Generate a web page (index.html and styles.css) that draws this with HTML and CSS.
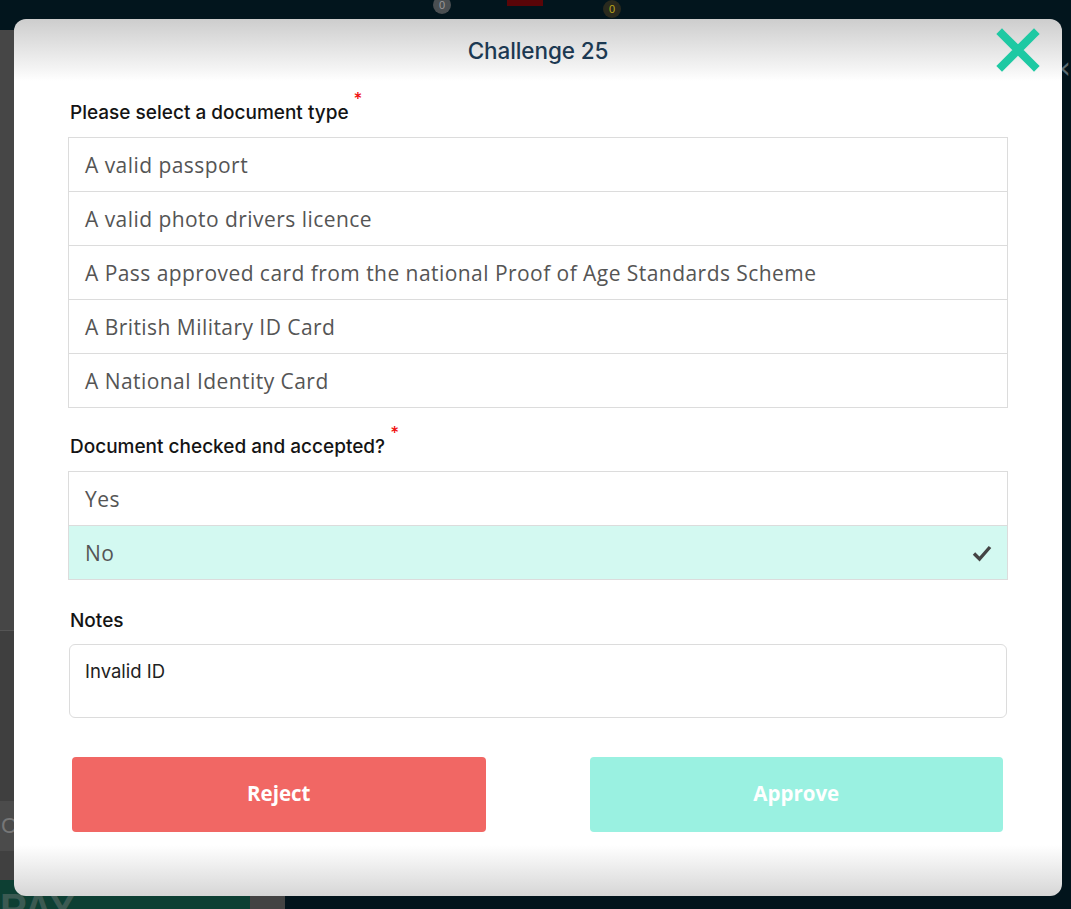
FILE: index.html
```html
<!DOCTYPE html>
<html lang="en">
<head>
<meta charset="utf-8">
<title>Challenge 25</title>
<link rel="stylesheet" href="styles.css">
</head>
<body>
<div class="backdrop">
  <div class="topbar">
    <span class="tb-badge tb-grey">0</span>
    <span class="tb-flag"></span>
    <span class="tb-badge tb-yellow">0</span>
  </div>
  <div class="middle">
    <div class="side">
      <div class="side-a"><span class="dots">⋮</span></div>
      <div class="side-b"></div>
      <div class="side-c">C</div>
      <div class="side-d"></div>
    </div>
    <div class="main-bg"><span class="chev">‹</span></div>
  </div>
  <div class="bottombar">
    <div class="bb-green">PAY</div>
    <div class="bb-grey"></div>
  </div>
</div>

<div class="modal">
  <div class="modal-head">
    <h1 class="modal-title">Challenge 25</h1>
    <button class="close" aria-label="Close">
      <svg viewBox="0 0 44 44" width="44" height="44"><path d="M6 6 L38 38 M38 6 L6 38" stroke="#1ec9a3" stroke-width="8" stroke-linecap="square" fill="none"/></svg>
    </button>
  </div>
  <div class="modal-body">
    <div class="field-label">Please select a document type<span class="req">*</span></div>
    <ul class="options">
      <li>A valid passport</li>
      <li>A valid photo drivers licence</li>
      <li>A Pass approved card from the national Proof of Age Standards Scheme</li>
      <li>A British Military ID Card</li>
      <li>A National Identity Card</li>
    </ul>

    <div class="field-label gap-top">Document checked and accepted?<span class="req">*</span></div>
    <ul class="options">
      <li>Yes</li>
      <li class="selected">No
        <svg class="tick" viewBox="0 0 20 18" width="20" height="18"><path d="M2 9.5 L7.5 15 L18 3" stroke="#444" stroke-width="3.4" fill="none"/></svg>
      </li>
    </ul>

    <div class="field-label notes-label">Notes</div>
    <div class="notes">Invalid ID</div>

    <div class="actions">
      <button class="btn btn-reject">Reject</button>
      <button class="btn btn-approve">Approve</button>
    </div>
  </div>
</div>
</body>
</html>
```

FILE: styles.css
```css
html, body {
  margin: 0;
  padding: 0;
  height: 100%;
}
body {
  background: #02141c;
  font-family: "Open Sans", sans-serif;
  overflow: hidden;
}

/* backdrop (app behind the dialog) */
.backdrop {
  display: flex;
  flex-direction: column;
  height: 909px;
}
.topbar {
  height: 30px;
  background: #02151d;
  position: relative;
}
.tb-badge {
  position: absolute;
  width: 18px;
  height: 18px;
  border-radius: 50%;
  font: 11px/18px "Liberation Sans", sans-serif;
  text-align: center;
}
.tb-grey { left: 433px; top: -4px; background: #4a4f52; color: #999; }
.tb-yellow { left: 603px; top: 0; background: #2a2a1e; color: #bba51c; }
.tb-flag {
  position: absolute;
  left: 507px;
  top: 0;
  width: 36px;
  height: 6px;
  background: #5a0508;
}
.middle {
  flex: 1;
  display: flex;
}
.side {
  width: 250px;
  display: flex;
  flex-direction: column;
}
.side-a { height: 600px; background: #464646; position: relative; }
.dots { position: absolute; left: 8px; top: 16px; color: #0a1a22; font: bold 22px "DejaVu Sans", sans-serif; }
.side-b { height: 170px; background: #3f3f3f; border-top: 1px solid #555; }
.side-c { height: 50px; background: #4b4b4b; color: #777; font: 22px/50px "Liberation Sans", sans-serif; padding-left: 1px; }
.side-d { flex: 1; background: #404040; }
.main-bg { flex: 1; background: #02141c; position: relative; }
.chev { position: absolute; right: 0; top: 20px; color: #5a6b72; font: 30px "DejaVu Sans", sans-serif; }
.bottombar {
  height: 29px;
  display: flex;
}
.bb-green {
  width: 250px;
  background: #0d3f33;
  color: #3b5a52;
  font: bold 40px/29px "Liberation Sans", sans-serif;
  padding-top: 14px;
  box-sizing: border-box;
  overflow: hidden;
}
.bb-grey { width: 35px; background: #434343; }

/* modal */
.modal {
  position: absolute;
  left: 14px;
  top: 19px;
  width: 1048px;
  height: 877px;
  border-radius: 12px;
  background: linear-gradient(to bottom, #cdcdcd 0, #f6f6f6 52px, #ffffff 62px, #ffffff 826px, #d6d6d6 877px);
  box-sizing: border-box;
}
.modal-head {
  height: 62px;
  display: flex;
  align-items: center;
  justify-content: center;
  position: relative;
}
.modal-title {
  margin: 0;
  font: 500 22.5px "Inter", sans-serif;
  color: #1c3952;
  letter-spacing: -0.1px;
}
.close {
  position: absolute;
  right: 22px;
  top: 9px;
  border: 0;
  background: none;
  padding: 0;
  width: 44px;
  height: 44px;
}
.close svg { display: block; }

.modal-body {
  padding: 20px 54px 0;
}
.field-label {
  font: 500 19px/24px "Inter", sans-serif;
  color: #141414;
  margin-bottom: 12px;
  padding-left: 2px;
}
.field-label.gap-top { margin-top: 27px; }
.field-label.notes-label { margin-top: 29px; margin-bottom: 11px; }
.req {
  color: #f01010;
  font-size: 17px;
  position: relative;
  top: -14px;
  left: 5px;
}
.options {
  list-style: none;
  margin: 0;
  padding: 0;
  border: 1px solid #dcdcdc;
}
.options li {
  height: 53px;
  display: flex;
  align-items: center;
  justify-content: space-between;
  padding: 0 16px;
  font: 21px "Open Sans", sans-serif;
  letter-spacing: 0.45px;
  color: #555;
  border-bottom: 1px solid #dcdcdc;
}
.options li:last-child { border-bottom: 0; }
.options li.selected { background: #d3f9f1; }
.tick { margin-right: -1px; }

.notes {
  margin: 0 1px;
  height: 74px;
  box-sizing: border-box;
  border: 1px solid #dcdcdc;
  border-radius: 6px;
  padding: 14px 15px;
  font: 18.5px/24px "Inter", sans-serif;
  color: #222;
}

.actions {
  display: grid;
  grid-template-columns: 1fr 1fr;
  column-gap: 104px;
  margin: 39px 5px 0 4px;
}
.btn {
  height: 75px;
  border: 0;
  border-radius: 4px;
  color: #fff;
  font: 700 20.5px "Open Sans", sans-serif;
  padding: 0 0 4px;
}
.btn-reject { background: #f16764; }
.btn-approve { background: #9af1e1; }
```
